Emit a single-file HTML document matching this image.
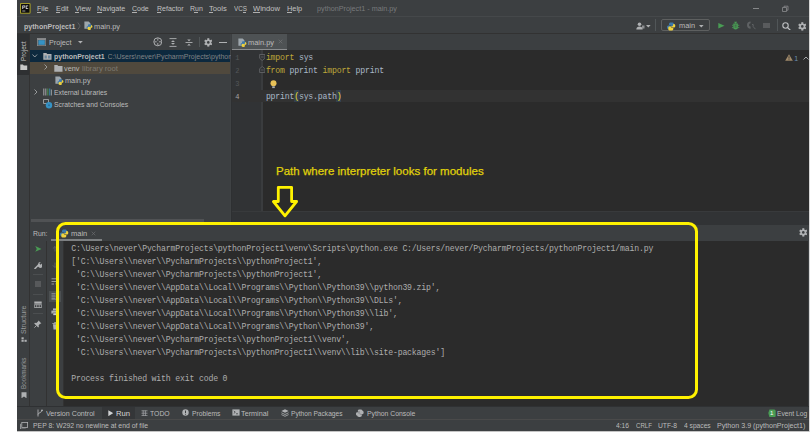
<!DOCTYPE html>
<html><head><meta charset="utf-8">
<style>
*{margin:0;padding:0;box-sizing:border-box}
html,body{width:810px;height:432px;overflow:hidden;background:#ffffff}
body{position:relative;font-family:"Liberation Sans",sans-serif;font-size:7px;color:#bbbbbb}
.a{position:absolute;display:block}
.t{position:absolute;white-space:nowrap;line-height:1}
.m{font-family:"Liberation Mono",monospace}
</style></head><body>
<div class="a" style="left:17px;top:0px;width:791.5px;height:431px;background:#3c3f41;"></div>
<div class="a" style="left:17px;top:16px;width:791.5px;height:1.3px;background:#45484a;"></div>
<div class="a" style="left:17px;top:33px;width:791.5px;height:1px;background:#323232;"></div>
<div class="a" style="left:17px;top:33.5px;width:12px;height:372.5px;background:#3c3f41;"></div>
<div class="a" style="left:17px;top:33.5px;width:12px;height:41.5px;background:#2e3032;"></div>
<div class="a" style="left:29px;top:33.5px;width:0.8px;height:372.5px;background:#323232;"></div>
<div class="a" style="left:29.8px;top:33.5px;width:201px;height:190.5px;background:#3c3f41;"></div>
<div class="a" style="left:29.8px;top:50px;width:201px;height:11.8px;background:#0d293e;"></div>
<div class="a" style="left:29.8px;top:61.8px;width:201px;height:11.8px;background:#50493d;"></div>
<div class="a" style="left:230.3px;top:33.5px;width:1.0px;height:191px;background:#3f4244;"></div>
<div class="a" style="left:231.2px;top:50.2px;width:0.9px;height:174.3px;background:#2e3032;"></div>
<div class="a" style="left:31px;top:219px;width:172.6px;height:3px;background:#505254;"></div>
<div class="a" style="left:231.5px;top:33.5px;width:577px;height:16.5px;background:#3c3f41;"></div>
<div class="a" style="left:231.5px;top:33.5px;width:55.5px;height:16.5px;background:#4e5254;"></div>
<div class="a" style="left:231.5px;top:48.5px;width:55.5px;height:1.5px;background:#8b8d8f;"></div>
<div class="a" style="left:231.5px;top:49.6px;width:577px;height:0.6px;background:#323232;"></div>
<div class="a" style="left:231.5px;top:50.2px;width:577px;height:160.8px;background:#2b2b2b;"></div>
<div class="a" style="left:231.5px;top:50.2px;width:29.5px;height:160.8px;background:#313335;"></div>
<div class="a" style="left:261px;top:50.2px;width:1.6px;height:160.8px;background:#3a3c3e;"></div>
<div class="a" style="left:231.5px;top:89.5px;width:577px;height:12.8px;background:#323232;"></div>
<div class="a" style="left:231.5px;top:211px;width:577px;height:13.5px;background:#313335;"></div>
<div class="a" style="left:231.5px;top:210.6px;width:577px;height:1px;background:#383a3c;"></div>
<div class="a" style="left:29.8px;top:224.5px;width:779px;height:16.2px;background:#3c3f41;"></div>
<div class="a" style="left:29.8px;top:240.7px;width:16.8px;height:165.3px;background:#3c3f41;"></div>
<div class="a" style="left:46.1px;top:240.7px;width:0.8px;height:165.3px;background:#323232;"></div>
<div class="a" style="left:46.9px;top:240.7px;width:17.1px;height:165.3px;background:#3c3f41;"></div>
<div class="a" style="left:63.0px;top:240.7px;width:0.8px;height:165.3px;background:#323232;"></div>
<div class="a" style="left:63.7px;top:240.7px;width:744.8px;height:165.3px;background:#2b2b2b;"></div>
<div class="a" style="left:17px;top:405.8px;width:791.5px;height:0.8px;background:#2f3133;"></div>
<div class="a" style="left:17px;top:406.5px;width:791.5px;height:13px;background:#3c3f41;"></div>
<div class="a" style="left:101.5px;top:406.5px;width:33px;height:13px;background:#343638;"></div>
<div class="a" style="left:17px;top:419.2px;width:791.5px;height:0.8px;background:#4a4a4a;"></div>
<div class="a" style="left:17px;top:420px;width:791.5px;height:10.8px;background:#3c3f41;"></div>
<div class="a" style="left:17px;top:430.8px;width:793px;height:1.2px;background:#c4c4c4;"></div>
<div class="a" style="left:808.6px;top:0px;width:1.4px;height:432px;background:#d6d6d6;"></div>
<svg class="a" style="left:20.2px;top:2.8px;" width="11" height="11" viewBox="0 0 11 11"><rect x="0.5" y="0.5" width="9.6" height="9.8" rx="0.8" fill="#0c0c0c" stroke="#a39c2c" stroke-width="1.1"/><path d="M2.3 2.4h0.9v3.6h-0.9zM3.2 2.4h1.6v0.8h-1.6zM4.4 2.4h0.8v2.2h-0.8zM3.2 3.9h1.6v0.7h-1.6zM5.8 2.4h2.4v0.8h-2.4zM5.8 2.4h0.8v3.6h-0.8zM5.8 5.3h2.4v0.8h-2.4z" fill="#e0e0e0"/><rect x="2.3" y="7.6" width="3" height="0.8" fill="#c8c8c8"/></svg>
<span class="t" style="transform-origin:0 0;transform:scaleX(1.0105);left:37.4px;top:5px;line-height:7px;font-size:7px;color:#c0c0c0;">File</span>
<div class="a" style="left:37.4px;top:12px;width:4px;height:0.9px;background:#b0b0b0;"></div>
<span class="t" style="transform-origin:0 0;transform:scaleX(1.0446);left:55.7px;top:5px;line-height:7px;font-size:7px;color:#c0c0c0;">Edit</span>
<div class="a" style="left:55.7px;top:12px;width:4px;height:0.9px;background:#b0b0b0;"></div>
<span class="t" style="transform-origin:0 0;transform:scaleX(1.0633);left:74.9px;top:5px;line-height:7px;font-size:7px;color:#c0c0c0;">View</span>
<div class="a" style="left:74.9px;top:12px;width:4.5px;height:0.9px;background:#b0b0b0;"></div>
<span class="t" style="transform-origin:0 0;transform:scaleX(1.0239);left:97.2px;top:5px;line-height:7px;font-size:7px;color:#c0c0c0;">Navigate</span>
<div class="a" style="left:97.2px;top:12px;width:5px;height:0.9px;background:#b0b0b0;"></div>
<span class="t" style="transform-origin:0 0;transform:scaleX(0.9979);left:132px;top:5px;line-height:7px;font-size:7px;color:#c0c0c0;">Code</span>
<div class="a" style="left:132px;top:12px;width:4.5px;height:0.9px;background:#b0b0b0;"></div>
<span class="t" style="transform-origin:0 0;transform:scaleX(1.0050);left:156.5px;top:5px;line-height:7px;font-size:7px;color:#c0c0c0;">Refactor</span>
<div class="a" style="left:156.5px;top:12px;width:4px;height:0.9px;background:#b0b0b0;"></div>
<span class="t" style="transform-origin:0 0;transform:scaleX(0.9966);left:190.4px;top:5px;line-height:7px;font-size:7px;color:#c0c0c0;">Run</span>
<div class="a" style="left:194.1px;top:12px;width:4px;height:0.9px;background:#b0b0b0;"></div>
<span class="t" style="transform-origin:0 0;transform:scaleX(1.0830);left:209.4px;top:5px;line-height:7px;font-size:7px;color:#c0c0c0;">Tools</span>
<div class="a" style="left:209.4px;top:12px;width:4px;height:0.9px;background:#b0b0b0;"></div>
<span class="t" style="transform-origin:0 0;transform:scaleX(0.9024);left:234px;top:5px;line-height:7px;font-size:7px;color:#c0c0c0;">VCS</span>
<div class="a" style="left:242.5px;top:12px;width:3.8px;height:0.9px;background:#b0b0b0;"></div>
<span class="t" style="transform-origin:0 0;transform:scaleX(1.0801);left:253.2px;top:5px;line-height:7px;font-size:7px;color:#c0c0c0;">Window</span>
<div class="a" style="left:253.2px;top:12px;width:6.5px;height:0.9px;background:#b0b0b0;"></div>
<span class="t" style="transform-origin:0 0;transform:scaleX(1.0551);left:287.1px;top:5px;line-height:7px;font-size:7px;color:#c0c0c0;">Help</span>
<div class="a" style="left:287.1px;top:12px;width:4.6px;height:0.9px;background:#b0b0b0;"></div>
<span class="t" style="transform-origin:0 0;transform:scaleX(1.0331);left:316.7px;top:5px;line-height:7px;font-size:7px;color:#787a7c;">pythonProject1 - main.py</span>
<div class="a" style="left:753px;top:8px;width:6px;height:0.8px;background:#858789;"></div>
<svg class="a" style="left:780.5px;top:4.5px;" width="8" height="8" viewBox="0 0 8 8"><path d="M1.5 2.5h4v4h-4z M3 2.5v-1.3h4v4h-1.5" fill="none" stroke="#8a8c8e" stroke-width="0.8"/></svg>
<span class="t" style="transform-origin:0 0;transform:scaleX(1.0068);left:23.7px;top:23px;line-height:7px;font-size:7px;color:#bbbbbb;font-weight:700;">pythonProject1</span>
<svg class="a" style="left:76.5px;top:22px;" width="4" height="8" viewBox="0 0 4 8"><path d="M0.8 0.5L3.2 4L0.8 7.5" fill="none" stroke="#6e6e6e" stroke-width="0.7"/></svg>
<svg class="a" style="left:83.6px;top:21px;" width="9" height="9" viewBox="0 0 9 9"><path d="M0.4 0.4h4.2l1.8 1.8v5.6H0.4z" fill="#9ea7ad"/><g transform="translate(2.6,2.9) scale(0.7)"><path d="M4 0.5c-1.6 0-2 0.7-2 1.5v1h2.2v0.5H1.3C0.5 3.5 0 4.2 0 5.3s0.5 1.9 1.3 1.9h0.8V6c0-0.8 0.7-1.4 1.5-1.4h2.2c0.6 0 1.2-0.5 1.2-1.2V2c0-0.9-0.8-1.5-2-1.5z" fill="#3c78aa"/><path d="M4.3 8.6c1.6 0 2-0.7 2-1.5v-1H4.1V5.6H7c0.8 0 1.3-0.7 1.3-1.8S7.8 1.9 7 1.9H6.2v1.2c0 0.8-0.7 1.4-1.5 1.4H2.5c-0.6 0-1.2 0.5-1.2 1.2V7c0 0.9 0.8 1.6 2 1.6z" fill="#f2d33c"/></g></svg>
<span class="t" style="transform-origin:0 0;transform:scaleX(1.0646);left:94px;top:23px;line-height:7px;font-size:7px;color:#bbbbbb;">main.py</span>
<svg class="a" style="left:635.5px;top:21.5px;" width="9" height="8" viewBox="0 0 9 8"><circle cx="3.5" cy="2.2" r="1.8" fill="#afb1b3"/><path d="M0.3 7.6c0-2 1.4-3 3.2-3s3.2 1 3.2 3z" fill="#afb1b3"/><path d="M6 3.5h2.5v3H6z" fill="#afb1b3" opacity="0.7"/></svg>
<svg class="a" style="left:646px;top:25px;" width="5" height="3" viewBox="0 0 5 3"><path d="M0 0h4.6L2.3 2.6z" fill="#afb1b3"/></svg>
<div class="a" style="left:655.2px;top:19.3px;width:0.8px;height:11.7px;background:#515658;"></div>
<div class="a" style="left:661.4px;top:19.3px;width:48.4px;height:12px;background:transparent;border:1px solid #5e6060;border-radius:2px"></div>
<svg class="a" style="left:666.7px;top:21.8px;" width="9" height="9" viewBox="0 0 9 9"><path d="M4 0.5c-1.6 0-2 0.7-2 1.5v1h2.2v0.5H1.3C0.5 3.5 0 4.2 0 5.3s0.5 1.9 1.3 1.9h0.8V6c0-0.8 0.7-1.4 1.5-1.4h2.2c0.6 0 1.2-0.5 1.2-1.2V2c0-0.9-0.8-1.5-2-1.5z" fill="#3c78aa"/><path d="M4.3 8.6c1.6 0 2-0.7 2-1.5v-1H4.1V5.6H7c0.8 0 1.3-0.7 1.3-1.8S7.8 1.9 7 1.9H6.2v1.2c0 0.8-0.7 1.4-1.5 1.4H2.5c-0.6 0-1.2 0.5-1.2 1.2V7c0 0.9 0.8 1.6 2 1.6z" fill="#f2d33c"/></svg>
<span class="t" style="transform-origin:0 0;transform:scaleX(1.0535);left:678.9px;top:22px;line-height:7px;font-size:7px;color:#bbbbbb;">main</span>
<svg class="a" style="left:699.4px;top:24.5px;" width="5" height="3" viewBox="0 0 5 3"><path d="M0 0h4.6L2.3 2.6z" fill="#afb1b3"/></svg>
<svg class="a" style="left:717.5px;top:22.5px;" width="7" height="6" viewBox="0 0 7 6"><path d="M0.3 0L6.5 2.8L0.3 5.6z" fill="#499c54"/></svg>
<svg class="a" style="left:732.3px;top:21.3px;" width="7.5" height="8.5" viewBox="0 0 7.5 8.5"><path d="M1.3 2.5h4.6v4.2c0 1-1 1.7-2.3 1.7S1.3 7.7 1.3 6.7z M2.1 0.8l0.9 1.4h1.2l0.9-1.4" fill="#499c54"/><path d="M0 4.3h1.3M5.9 4.3h1.4M0 6.6h1.3M5.9 6.6h1.4" stroke="#499c54" stroke-width="0.8"/><path d="M2.6 4.2h2M2.6 6h2" stroke="#3c3f41" stroke-width="0.7"/></svg>
<svg class="a" style="left:746.8px;top:21.3px;" width="9" height="8.5" viewBox="0 0 9 8.5"><path d="M3.6 0.5a3.6 3.6 0 1 0 0 7.2V5.5a1.6 1.6 0 1 1 0-3.2z" fill="#5f6264"/><path d="M5 3.5h1.2v2.2l2.3 2.5" fill="none" stroke="#5f6264" stroke-width="1"/></svg>
<div class="a" style="left:763.4px;top:22.7px;width:6.4px;height:5.6px;background:#595b5d;"></div>
<div class="a" style="left:776.5px;top:19.3px;width:0.8px;height:11.7px;background:#515658;"></div>
<svg class="a" style="left:781.8px;top:21.8px;" width="9" height="8.5" viewBox="0 0 9 8.5"><circle cx="3.5" cy="3.5" r="2.7" fill="none" stroke="#bfc1c3" stroke-width="1.1"/><path d="M5.4 5.4L8.3 8.2" stroke="#bfc1c3" stroke-width="1.3"/></svg>
<svg class="a" style="left:797.8px;top:22px;" width="8.6" height="8.8" viewBox="0 0 8.6 8.8"><g transform="translate(4.3,4.4)" fill="#afb1b3"><circle r="3"/><rect x="-1" y="-4.2" width="2" height="2" transform="rotate(0)"/><rect x="-1" y="-4.2" width="2" height="2" transform="rotate(60)"/><rect x="-1" y="-4.2" width="2" height="2" transform="rotate(120)"/><rect x="-1" y="-4.2" width="2" height="2" transform="rotate(180)"/><rect x="-1" y="-4.2" width="2" height="2" transform="rotate(240)"/><rect x="-1" y="-4.2" width="2" height="2" transform="rotate(300)"/><circle r="1.3" fill="#3c3f41"/></g></svg>
<svg class="a" style="left:36.8px;top:38.2px;" width="9.2" height="8.2" viewBox="0 0 9.2 8.2"><rect x="0.4" y="0.4" width="8.4" height="7.4" fill="#4e5254" stroke="#8a8c8e" stroke-width="0.8"/><rect x="1.4" y="2.2" width="6.4" height="4.6" fill="#3592c4"/><rect x="0.4" y="0.4" width="8.4" height="1.6" fill="#8a8c8e"/></svg>
<span class="t" style="transform-origin:0 0;transform:scaleX(1.0323);left:48.6px;top:39px;line-height:7px;font-size:7px;color:#bbbbbb;">Project</span>
<svg class="a" style="left:78px;top:41px;" width="5" height="3" viewBox="0 0 5 3"><path d="M0 0h4.8L2.4 2.6z" fill="#afb1b3"/></svg>
<svg class="a" style="left:152.8px;top:37.4px;" width="9.6" height="9.6" viewBox="0 0 9.6 9.6"><circle cx="4.8" cy="4.8" r="4" fill="none" stroke="#afb1b3" stroke-width="1"/><path d="M4.8 1.5v2.2M4.8 5.9v2.2M1.5 4.8h2.2M5.9 4.8h2.2" stroke="#afb1b3" stroke-width="0.9"/></svg>
<svg class="a" style="left:168.8px;top:37.8px;" width="8" height="9" viewBox="0 0 8 9"><path d="M0.5 0.6h7M0.5 8.4h7" stroke="#afb1b3" stroke-width="0.9"/><path d="M4 2.2L2 4h4z M4 6.8L2 5h4z" fill="#afb1b3"/></svg>
<svg class="a" style="left:184.8px;top:37.8px;" width="8" height="9" viewBox="0 0 8 9"><path d="M0.5 4.5h7" stroke="#afb1b3" stroke-width="0.9"/><path d="M4 3.3L2.2 1.4h3.6z M4 5.7L2.2 7.6h3.6z" fill="#afb1b3"/></svg>
<div class="a" style="left:198.6px;top:37px;width:0.8px;height:10px;background:#515658;"></div>
<svg class="a" style="left:203.8px;top:37.8px;" width="8.6" height="8.8" viewBox="0 0 8.6 8.8"><g transform="translate(4.3,4.4)" fill="#afb1b3"><circle r="3"/><rect x="-1" y="-4.2" width="2" height="2" transform="rotate(0)"/><rect x="-1" y="-4.2" width="2" height="2" transform="rotate(60)"/><rect x="-1" y="-4.2" width="2" height="2" transform="rotate(120)"/><rect x="-1" y="-4.2" width="2" height="2" transform="rotate(180)"/><rect x="-1" y="-4.2" width="2" height="2" transform="rotate(240)"/><rect x="-1" y="-4.2" width="2" height="2" transform="rotate(300)"/><circle r="1.3" fill="#3c3f41"/></g></svg>
<div class="a" style="left:219.4px;top:41.5px;width:7.8px;height:1px;background:#afb1b3;"></div>
<svg class="a" style="left:32.3px;top:53.5px;" width="6" height="4" viewBox="0 0 6 4"><path d="M0.5 0.5L2.8 3L5.1 0.5" fill="none" stroke="#afb1b3" stroke-width="0.8"/></svg>
<svg class="a" style="left:43.4px;top:52px;" width="9" height="8" viewBox="0 0 9 8"><path d="M0.3 1h3l1 1h4.2v5.7H0.3z" fill="#afb1b3"/><path d="M1.6 3.5h2.2v3H1.6zM5 3.5h2.4v3H5z" fill="#3a6b8f" opacity="0.6"/></svg>
<span class="t" style="transform-origin:0 0;transform:scaleX(0.9950);left:53.9px;top:53px;line-height:7px;font-size:7px;color:#bbbbbb;font-weight:700;">pythonProject1</span>
<div class="a" style="left:107.6px;top:50px;width:123px;height:12px;overflow:hidden"><span class="t" style="left:0;top:3px;line-height:7px;font-size:7px;color:#808385">C:\Users\never\PycharmProjects\pythonProject1</span></div>
<svg class="a" style="left:44px;top:64.2px;" width="4" height="6" viewBox="0 0 4 6"><path d="M0.5 0.5L3 3L0.5 5.5" fill="none" stroke="#afb1b3" stroke-width="0.8"/></svg>
<svg class="a" style="left:54px;top:63.8px;" width="9" height="8" viewBox="0 0 9 8"><path d="M0.3 1h3l1 1h4.2v5.7H0.3z" fill="#afb1b3"/></svg>
<span class="t" style="transform-origin:0 0;transform:scaleX(1.0475);left:64.4px;top:65px;line-height:7px;font-size:7px;color:#bbbbbb;">venv</span>
<span class="t" style="transform-origin:0 0;transform:scaleX(1.0853);left:81.7px;top:65px;line-height:7px;font-size:7px;color:#7e7a72;">library root</span>
<svg class="a" style="left:55px;top:75.5px;" width="9" height="9" viewBox="0 0 9 9"><path d="M0.4 0.4h4.2l1.8 1.8v5.6H0.4z" fill="#9ea7ad"/><g transform="translate(2.6,2.9) scale(0.7)"><path d="M4 0.5c-1.6 0-2 0.7-2 1.5v1h2.2v0.5H1.3C0.5 3.5 0 4.2 0 5.3s0.5 1.9 1.3 1.9h0.8V6c0-0.8 0.7-1.4 1.5-1.4h2.2c0.6 0 1.2-0.5 1.2-1.2V2c0-0.9-0.8-1.5-2-1.5z" fill="#3c78aa"/><path d="M4.3 8.6c1.6 0 2-0.7 2-1.5v-1H4.1V5.6H7c0.8 0 1.3-0.7 1.3-1.8S7.8 1.9 7 1.9H6.2v1.2c0 0.8-0.7 1.4-1.5 1.4H2.5c-0.6 0-1.2 0.5-1.2 1.2V7c0 0.9 0.8 1.6 2 1.6z" fill="#f2d33c"/></g></svg>
<span class="t" style="transform-origin:0 0;transform:scaleX(1.0442);left:64.8px;top:77px;line-height:7px;font-size:7px;color:#bbbbbb;">main.py</span>
<svg class="a" style="left:33.6px;top:88.8px;" width="4" height="6" viewBox="0 0 4 6"><path d="M0.5 0.5L3 3L0.5 5.5" fill="none" stroke="#afb1b3" stroke-width="0.8"/></svg>
<svg class="a" style="left:42.8px;top:88px;" width="9" height="8" viewBox="0 0 9 8"><path d="M0.8 0.5v7M2.8 0.5v7" stroke="#afb1b3" stroke-width="0.9"/><path d="M4.8 0.5v7" stroke="#499c54" stroke-width="0.9"/><path d="M6.8 0.5v7" stroke="#3592c4" stroke-width="0.9"/><path d="M8.4 1.5v6" stroke="#afb1b3" stroke-width="0.8"/></svg>
<span class="t" style="transform-origin:0 0;transform:scaleX(0.9767);left:53.9px;top:89px;line-height:7px;font-size:7px;color:#bbbbbb;">External Libraries</span>
<svg class="a" style="left:42.8px;top:99.2px;" width="10" height="10" viewBox="0 0 10 10"><path d="M0.5 0.5h5v4h-5z" fill="none" stroke="#afb1b3" stroke-width="0.8"/><circle cx="6" cy="6.3" r="3.2" fill="#3592c4"/><circle cx="6" cy="6.3" r="1" fill="#2c6fa0"/></svg>
<span class="t" style="transform-origin:0 0;transform:scaleX(0.9777);left:53.9px;top:101px;line-height:7px;font-size:7px;color:#bbbbbb;">Scratches and Consoles</span>
<span class="t" style="left:0px;top:-6px;line-height:7px;font-size:7px;color:#bbbbbb;"></span>
<span class="t" style="left:20.3px;top:60.5px;font-size:6.3px;line-height:7px;color:#c4c4c4;transform-origin:0 0;transform:rotate(-90deg);">Project</span>
<svg class="a" style="left:20.2px;top:63.5px;" width="7.5" height="6.5" viewBox="0 0 7.5 6.5"><path d="M0.3 0.6h2.6l0.9 0.9h3.4v4.7H0.3z" fill="#c8c8c8"/></svg>
<svg class="a" style="left:237.8px;top:38.2px;" width="9" height="9" viewBox="0 0 9 9"><path d="M0.4 0.4h4.2l1.8 1.8v5.6H0.4z" fill="#9ea7ad"/><g transform="translate(2.6,2.9) scale(0.7)"><path d="M4 0.5c-1.6 0-2 0.7-2 1.5v1h2.2v0.5H1.3C0.5 3.5 0 4.2 0 5.3s0.5 1.9 1.3 1.9h0.8V6c0-0.8 0.7-1.4 1.5-1.4h2.2c0.6 0 1.2-0.5 1.2-1.2V2c0-0.9-0.8-1.5-2-1.5z" fill="#3c78aa"/><path d="M4.3 8.6c1.6 0 2-0.7 2-1.5v-1H4.1V5.6H7c0.8 0 1.3-0.7 1.3-1.8S7.8 1.9 7 1.9H6.2v1.2c0 0.8-0.7 1.4-1.5 1.4H2.5c-0.6 0-1.2 0.5-1.2 1.2V7c0 0.9 0.8 1.6 2 1.6z" fill="#f2d33c"/></g></svg>
<span class="t" style="transform-origin:0 0;transform:scaleX(1.0605);left:248.2px;top:39px;line-height:7px;font-size:7px;color:#bbbbbb;">main.py</span>
<svg class="a" style="left:278px;top:39.3px;" width="5" height="5" viewBox="0 0 5 5"><path d="M0.7 0.7L4.3 4.3M4.3 0.7L0.7 4.3" stroke="#727476" stroke-width="0.7"/></svg>
<span class="t m" style="left:235.2px;top:54px;line-height:8px;font-size:7px;color:#54575a;letter-spacing:-0.2px;">1</span>
<span class="t m" style="left:235.2px;top:67px;line-height:8px;font-size:7px;color:#54575a;letter-spacing:-0.2px;">2</span>
<span class="t m" style="left:235.2px;top:80px;line-height:8px;font-size:7px;color:#54575a;letter-spacing:-0.2px;">3</span>
<span class="t m" style="left:235.2px;top:93px;line-height:8px;font-size:7px;color:#a4a3a3;letter-spacing:-0.2px;">4</span>
<svg class="a" style="left:258.5px;top:53.5px;" width="6.5" height="7" viewBox="0 0 6.5 7"><path d="M0.6 0.5h5.3v3.8L3.25 6.5L0.6 4.3z" fill="#313335" stroke="#6e7072" stroke-width="0.7"/><path d="M1.8 3h2.9" stroke="#6e7072" stroke-width="0.6"/></svg>
<svg class="a" style="left:258.5px;top:65.8px;" width="6.5" height="7" viewBox="0 0 6.5 7"><path d="M0.6 6.5h5.3v-3.8L3.25 0.5L0.6 2.7z" fill="#313335" stroke="#6e7072" stroke-width="0.7"/><path d="M1.8 4h2.9" stroke="#6e7072" stroke-width="0.6"/></svg>
<span class="t m" style="left:265.9px;top:53px;line-height:9px;font-size:8.2px;color:#bfa83a;letter-spacing:-0.2px;">import</span>
<span class="t m" style="left:294.21999999999997px;top:53px;line-height:9px;font-size:8.2px;color:#a9b7c6;letter-spacing:-0.2px;">&nbsp;sys</span>
<span class="t m" style="left:265.9px;top:66px;line-height:9px;font-size:8.2px;color:#bfa83a;letter-spacing:-0.2px;">from</span>
<span class="t m" style="left:284.78px;top:66px;line-height:9px;font-size:8.2px;color:#a9b7c6;letter-spacing:-0.2px;">&nbsp;pprint&nbsp;</span>
<span class="t m" style="left:322.53999999999996px;top:66px;line-height:9px;font-size:8.2px;color:#bfa83a;letter-spacing:-0.2px;">import</span>
<span class="t m" style="left:350.85999999999996px;top:66px;line-height:9px;font-size:8.2px;color:#a9b7c6;letter-spacing:-0.2px;">&nbsp;pprint</span>
<div class="a" style="left:293.61999999999995px;top:89.8px;width:5.3px;height:12px;background:#34404e;"></div>
<div class="a" style="left:336.09999999999997px;top:89.8px;width:5.3px;height:12px;background:#34404e;"></div>
<span class="t m" style="left:265.9px;top:92px;line-height:9px;font-size:8.2px;color:#a9b7c6;letter-spacing:-0.2px;">pprint</span>
<span class="t m" style="left:294.21999999999997px;top:92px;line-height:9px;font-size:8.2px;color:#f5e22a;letter-spacing:-0.2px;">(</span>
<span class="t m" style="left:298.94px;top:92px;line-height:9px;font-size:8.2px;color:#a9b7c6;letter-spacing:-0.2px;">sys.path</span>
<span class="t m" style="left:336.7px;top:92px;line-height:9px;font-size:8.2px;color:#f5e22a;letter-spacing:-0.2px;">)</span>
<svg class="a" style="left:269.6px;top:80.4px;" width="7" height="9" viewBox="0 0 7 9"><circle cx="3.5" cy="3.3" r="3" fill="#e8c157"/><rect x="2.2" y="6.3" width="2.6" height="1.8" fill="#a8adb1"/></svg>
<svg class="a" style="left:784.8px;top:54.3px;" width="8" height="7" viewBox="0 0 8 7"><path d="M4 0.3L7.8 6.7H0.2z" fill="#a18a6a"/><path d="M4 2.3v2.3M4 5.3v0.8" stroke="#2b2b2b" stroke-width="0.8"/></svg>
<span class="t" style="left:794.3px;top:55px;line-height:7px;font-size:7px;color:#6c8fb3;">1</span>
<svg class="a" style="left:802.8px;top:55.5px;" width="6" height="4" viewBox="0 0 6 4"><path d="M0.5 3.5L3 1L5.5 3.5" fill="none" stroke="#afb1b3" stroke-width="0.9"/></svg>
<span class="t" style="transform-origin:0 0;transform:scaleX(1.0125);left:275.7px;top:165px;line-height:12px;font-size:11.4px;color:#e0d20a;-webkit-text-stroke:0.25px #e0d20a;">Path where interpreter looks for modules</span>
<svg class="a" style="left:266px;top:182px;" width="40" height="40" viewBox="0 0 40 40"><path d="M12.3 5.3H25.6V19.5H30.6L19 33.8L7.4 19.5H12.3Z" fill="none" stroke="#fff200" stroke-width="2.8" stroke-linejoin="round"/></svg>
<span class="t" style="transform-origin:0 0;transform:scaleX(0.9799);left:33.3px;top:230px;line-height:7px;font-size:7px;color:#bbbbbb;">Run:</span>
<svg class="a" style="left:59.6px;top:228.8px;" width="9" height="9" viewBox="0 0 9 9"><path d="M4 0.5c-1.6 0-2 0.7-2 1.5v1h2.2v0.5H1.3C0.5 3.5 0 4.2 0 5.3s0.5 1.9 1.3 1.9h0.8V6c0-0.8 0.7-1.4 1.5-1.4h2.2c0.6 0 1.2-0.5 1.2-1.2V2c0-0.9-0.8-1.5-2-1.5z" fill="#3c78aa"/><path d="M4.3 8.6c1.6 0 2-0.7 2-1.5v-1H4.1V5.6H7c0.8 0 1.3-0.7 1.3-1.8S7.8 1.9 7 1.9H6.2v1.2c0 0.8-0.7 1.4-1.5 1.4H2.5c-0.6 0-1.2 0.5-1.2 1.2V7c0 0.9 0.8 1.6 2 1.6z" fill="#f2d33c"/></svg>
<span class="t" style="transform-origin:0 0;transform:scaleX(1.0733);left:70.6px;top:230px;line-height:7px;font-size:7px;color:#bbbbbb;">main</span>
<svg class="a" style="left:91px;top:230.5px;" width="5" height="5" viewBox="0 0 5 5"><path d="M0.7 0.7L4.3 4.3M4.3 0.7L0.7 4.3" stroke="#6a6c6e" stroke-width="0.7"/></svg>
<div class="a" style="left:51px;top:239.2px;width:51px;height:1.6px;background:#7d8082;"></div>
<svg class="a" style="left:798.8px;top:228.3px;" width="8.6" height="8.8" viewBox="0 0 8.6 8.8"><g transform="translate(4.3,4.4)" fill="#afb1b3"><circle r="3"/><rect x="-1" y="-4.2" width="2" height="2" transform="rotate(0)"/><rect x="-1" y="-4.2" width="2" height="2" transform="rotate(60)"/><rect x="-1" y="-4.2" width="2" height="2" transform="rotate(120)"/><rect x="-1" y="-4.2" width="2" height="2" transform="rotate(180)"/><rect x="-1" y="-4.2" width="2" height="2" transform="rotate(240)"/><rect x="-1" y="-4.2" width="2" height="2" transform="rotate(300)"/><circle r="1.3" fill="#3c3f41"/></g></svg>
<svg class="a" style="left:34.5px;top:246.2px;" width="7" height="6" viewBox="0 0 7 6"><path d="M0.2 0L6.5 2.9L0.2 5.8L1.8 2.9z" fill="#499c54"/></svg>
<svg class="a" style="left:33.5px;top:260.5px;" width="8.5" height="8.5" viewBox="0 0 8.5 8.5"><path d="M1 7.5L4.3 4.2" stroke="#afb1b3" stroke-width="1.6" stroke-linecap="round"/><path d="M4 3.2a2.6 2.6 0 1 0 4.2 -0.8l-1.6 1.4-1.2-1.2 1.4-1.6a2.6 2.6 0 0 0 -2.8 2.2z" fill="#afb1b3"/></svg>
<div class="a" style="left:33px;top:274.4px;width:9.5px;height:0.6px;background:#4b4e50;"></div>
<div class="a" style="left:35.2px;top:281.3px;width:6px;height:6px;background:#57595b;"></div>
<div class="a" style="left:33px;top:293.8px;width:9.5px;height:0.6px;background:#4b4e50;"></div>
<svg class="a" style="left:33.8px;top:300.8px;" width="8" height="7" viewBox="0 0 8 7"><rect x="0.3" y="0.5" width="7.4" height="2.2" fill="#afb1b3"/><path d="M0.3 3.7h7.4v2.8H0.3z" fill="none" stroke="#afb1b3" stroke-width="0.8"/><path d="M2.7 3.7v2.8M5.2 3.7v2.8" stroke="#afb1b3" stroke-width="0.7"/></svg>
<div class="a" style="left:33px;top:313px;width:9.5px;height:0.6px;background:#4b4e50;"></div>
<svg class="a" style="left:34px;top:319.5px;" width="8" height="8" viewBox="0 0 8 8"><path d="M4.6 0.6l2.8 2.8-1.2 0.3-1.6 1.6 0.3 1.5-0.7 0.7-4-4 0.7-0.7 1.5 0.3 1.6-1.6z" fill="#afb1b3"/><path d="M2.3 5.7L0.4 7.6" stroke="#afb1b3" stroke-width="0.9"/></svg>
<svg class="a" style="left:51.5px;top:246px;" width="6" height="6" viewBox="0 0 6 6"><path d="M3 0.5v5M0.8 2.7L3 0.5l2.2 2.2" fill="none" stroke="#5f6264" stroke-width="0.9"/></svg>
<svg class="a" style="left:51.5px;top:262px;" width="6" height="6" viewBox="0 0 6 6"><path d="M3 0.5v5M0.8 3.3L3 5.5l2.2-2.2" fill="none" stroke="#5f6264" stroke-width="0.9"/></svg>
<svg class="a" style="left:50.5px;top:277.5px;" width="8" height="7" viewBox="0 0 8 7"><path d="M0.5 0.8h7M0.5 3.5h5.6a1.2 1.2 0 0 1 0 2.4H4.5M0.5 6h2.5" fill="none" stroke="#afb1b3" stroke-width="0.8"/></svg>
<div class="a" style="left:48.5px;top:290.5px;width:12px;height:11px;background:#4c5052;"></div>
<svg class="a" style="left:50.5px;top:292.5px;" width="8" height="7.5" viewBox="0 0 8 7.5"><path d="M0.5 0.8h4M0.5 3h4M0.5 5.2h4M0.5 7h7" fill="none" stroke="#afb1b3" stroke-width="0.8"/><path d="M6.2 0.5v4.5M5 3.8L6.2 5l1.2-1.2" fill="none" stroke="#afb1b3" stroke-width="0.7"/></svg>
<svg class="a" style="left:50.5px;top:308px;" width="8.5" height="7.5" viewBox="0 0 8.5 7.5"><rect x="2" y="0.4" width="4.5" height="2" fill="#afb1b3"/><rect x="0.4" y="2.6" width="7.7" height="3" fill="#afb1b3"/><rect x="2" y="5" width="4.5" height="2.2" fill="#d0d0d0" stroke="#3c3f41" stroke-width="0.5"/></svg>
<svg class="a" style="left:51.5px;top:322px;" width="7" height="8" viewBox="0 0 7 8"><path d="M0.3 1.5h6.4M2.5 1.5v-1h2v1" fill="none" stroke="#afb1b3" stroke-width="0.8"/><path d="M1 2.3h5l-0.5 5.3h-4z" fill="#afb1b3"/></svg>
<span class="t m" style="left:71.2px;top:244px;line-height:9px;font-size:8.2px;color:#adadad;letter-spacing:-0.182px;">C:\Users\never\PycharmProjects\pythonProject1\venv\Scripts\python.exe&nbsp;C:/Users/never/PycharmProjects/pythonProject1/main.py</span>
<span class="t m" style="left:71.2px;top:257px;line-height:9px;font-size:8.2px;color:#adadad;letter-spacing:-0.182px;">['C:\\Users\\never\\PycharmProjects\\pythonProject1',</span>
<span class="t m" style="left:71.2px;top:270px;line-height:9px;font-size:8.2px;color:#adadad;letter-spacing:-0.182px;">&nbsp;'C:\\Users\\never\\PycharmProjects\\pythonProject1',</span>
<span class="t m" style="left:71.2px;top:283px;line-height:9px;font-size:8.2px;color:#adadad;letter-spacing:-0.182px;">&nbsp;'C:\\Users\\never\\AppData\\Local\\Programs\\Python\\Python39\\python39.zip',</span>
<span class="t m" style="left:71.2px;top:296px;line-height:9px;font-size:8.2px;color:#adadad;letter-spacing:-0.182px;">&nbsp;'C:\\Users\\never\\AppData\\Local\\Programs\\Python\\Python39\\DLLs',</span>
<span class="t m" style="left:71.2px;top:309px;line-height:9px;font-size:8.2px;color:#adadad;letter-spacing:-0.182px;">&nbsp;'C:\\Users\\never\\AppData\\Local\\Programs\\Python\\Python39\\lib',</span>
<span class="t m" style="left:71.2px;top:322px;line-height:9px;font-size:8.2px;color:#adadad;letter-spacing:-0.182px;">&nbsp;'C:\\Users\\never\\AppData\\Local\\Programs\\Python\\Python39',</span>
<span class="t m" style="left:71.2px;top:335px;line-height:9px;font-size:8.2px;color:#adadad;letter-spacing:-0.182px;">&nbsp;'C:\\Users\\never\\PycharmProjects\\pythonProject1\\venv',</span>
<span class="t m" style="left:71.2px;top:348px;line-height:9px;font-size:8.2px;color:#adadad;letter-spacing:-0.182px;">&nbsp;'C:\\Users\\never\\PycharmProjects\\pythonProject1\\venv\\lib\\site-packages']</span>
<span class="t m" style="left:71.2px;top:374px;line-height:9px;font-size:8.2px;color:#adadad;letter-spacing:-0.182px;">Process&nbsp;finished&nbsp;with&nbsp;exit&nbsp;code&nbsp;0</span>
<div class="a" style="left:55.7px;top:221.9px;width:642px;height:177.1px;border:3.3px solid #fff200;border-radius:9.5px"></div>
<svg class="a" style="left:36.8px;top:409.3px;" width="6" height="8" viewBox="0 0 6 8"><path d="M1 0.5v7M1 5.5c0-2 4-1.5 4-4.5" fill="none" stroke="#afb1b3" stroke-width="0.9"/><circle cx="5" cy="1.3" r="0.9" fill="#afb1b3"/></svg>
<span class="t" style="transform-origin:0 0;transform:scaleX(1.0176);left:46.4px;top:410px;line-height:7px;font-size:7px;color:#bbbbbb;">Version Control</span>
<svg class="a" style="left:107.7px;top:409.8px;" width="5.5" height="6.5" viewBox="0 0 5.5 6.5"><path d="M0.3 0.2L5.2 3.2L0.3 6.2z" fill="#cfd1d3"/></svg>
<span class="t" style="transform-origin:0 0;transform:scaleX(1.0900);left:116.3px;top:410px;line-height:7px;font-size:7px;color:#d8d8d8;">Run</span>
<svg class="a" style="left:140.8px;top:409.8px;" width="7" height="6.5" viewBox="0 0 7 6.5"><path d="M0.5 0.8h6M0.5 3.2h6M0.5 5.6h6M2.2 0.5v5.5M4.4 0.5v5.5" stroke="#9da0a2" stroke-width="0.8"/></svg>
<span class="t" style="transform-origin:0 0;transform:scaleX(0.9796);left:150.3px;top:410px;line-height:7px;font-size:7px;color:#bbbbbb;">TODO</span>
<svg class="a" style="left:181.8px;top:409.2px;" width="7" height="7" viewBox="0 0 7 7"><circle cx="3.5" cy="3.5" r="3.2" fill="#afb1b3"/><path d="M3.5 1.6v2.4M3.5 4.8v0.9" stroke="#3c3f41" stroke-width="1"/></svg>
<span class="t" style="transform-origin:0 0;transform:scaleX(0.9602);left:191.5px;top:410px;line-height:7px;font-size:7px;color:#bbbbbb;">Problems</span>
<svg class="a" style="left:231.6px;top:409.3px;" width="8" height="7" viewBox="0 0 8 7"><rect x="0.4" y="0.4" width="7.2" height="6.2" fill="#afb1b3"/><path d="M1.8 2l1.5 1.2-1.5 1.2M4 4.8h2" fill="none" stroke="#3c3f41" stroke-width="0.8"/></svg>
<span class="t" style="transform-origin:0 0;transform:scaleX(1.0358);left:241.4px;top:410px;line-height:7px;font-size:7px;color:#bbbbbb;">Terminal</span>
<svg class="a" style="left:281.2px;top:408.8px;" width="8" height="8" viewBox="0 0 8 8"><path d="M4 0.3L7.6 2L4 3.7L0.4 2z" fill="#afb1b3"/><path d="M0.4 3.8L4 5.5L7.6 3.8M0.4 5.6L4 7.3L7.6 5.6" fill="none" stroke="#afb1b3" stroke-width="0.8"/></svg>
<span class="t" style="transform-origin:0 0;transform:scaleX(0.9452);left:291.4px;top:410px;line-height:7px;font-size:7px;color:#bbbbbb;">Python Packages</span>
<svg class="a" style="left:356.4px;top:408.6px;" width="8.5" height="8.5" viewBox="0 0 8.5 8.5"><g transform="scale(0.92)"><path d="M4 0.5c-1.6 0-2 0.7-2 1.5v1h2.2v0.5H1.3C0.5 3.5 0 4.2 0 5.3s0.5 1.9 1.3 1.9h0.8V6c0-0.8 0.7-1.4 1.5-1.4h2.2c0.6 0 1.2-0.5 1.2-1.2V2c0-0.9-0.8-1.5-2-1.5z" fill="#afb1b3"/><path d="M4.3 8.6c1.6 0 2-0.7 2-1.5v-1H4.1V5.6H7c0.8 0 1.3-0.7 1.3-1.8S7.8 1.9 7 1.9H6.2v1.2c0 0.8-0.7 1.4-1.5 1.4H2.5c-0.6 0-1.2 0.5-1.2 1.2V7c0 0.9 0.8 1.6 2 1.6z" fill="#afb1b3"/></g></svg>
<span class="t" style="transform-origin:0 0;transform:scaleX(0.9793);left:366.6px;top:410px;line-height:7px;font-size:7px;color:#bbbbbb;">Python Console</span>
<svg class="a" style="left:767.5px;top:409px;" width="8" height="8" viewBox="0 0 8 8"><path d="M1.5 0.5h5l1.2 1.2v5.6l-1.2 1.2h-5L0.3 4z" fill="#499c54"/></svg>
<span class="t" style="left:770px;top:410px;line-height:6px;font-size:6px;color:#ffffff;">1</span>
<span class="t" style="transform-origin:0 0;transform:scaleX(0.9546);left:777.3px;top:410px;line-height:7px;font-size:7px;color:#bbbbbb;">Event Log</span>
<svg class="a" style="left:19.8px;top:421.5px;" width="8" height="7.5" viewBox="0 0 8 7.5"><rect x="1.8" y="0.4" width="5.8" height="5" fill="none" stroke="#afb1b3" stroke-width="0.8"/><path d="M0.4 1.8v5.3h5.3" fill="none" stroke="#afb1b3" stroke-width="0.8"/></svg>
<span class="t" style="transform-origin:0 0;transform:scaleX(0.9805);left:33px;top:422px;line-height:7px;font-size:7px;color:#bbbbbb;">PEP 8: W292 no newline at end of file</span>
<span class="t" style="transform-origin:0 0;transform:scaleX(0.9541);left:616px;top:422px;line-height:7px;font-size:7px;color:#bbbbbb;">4:16</span>
<span class="t" style="transform-origin:0 0;transform:scaleX(0.8752);left:635.7px;top:422px;line-height:7px;font-size:7px;color:#bbbbbb;">CRLF</span>
<span class="t" style="transform-origin:0 0;transform:scaleX(0.9625);left:658.3px;top:422px;line-height:7px;font-size:7px;color:#bbbbbb;">UTF-8</span>
<span class="t" style="transform-origin:0 0;transform:scaleX(0.9525);left:684px;top:422px;line-height:7px;font-size:7px;color:#bbbbbb;">4 spaces</span>
<span class="t" style="transform-origin:0 0;transform:scaleX(1.0187);left:717.3px;top:422px;line-height:7px;font-size:7px;color:#bbbbbb;">Python 3.9 (pythonProject1)</span>
<span class="t" style="left:19.8px;top:333.5px;font-size:7px;line-height:7px;color:#9a9c9e;transform-origin:0 0;transform:rotate(-90deg);">Structure</span>
<svg class="a" style="left:20.5px;top:336.8px;" width="6" height="5" viewBox="0 0 6 5"><rect x="0.5" y="0.3" width="2.2" height="2" fill="#afb1b3"/><rect x="0.5" y="2.8" width="2.2" height="2" fill="#afb1b3"/><rect x="3.5" y="2.8" width="2.2" height="2" fill="#afb1b3"/></svg>
<span class="t" style="left:19.8px;top:388.5px;font-size:6.3px;line-height:7px;color:#9a9c9e;transform-origin:0 0;transform:rotate(-90deg);">Bookmarks</span>
<svg class="a" style="left:20.8px;top:391.5px;" width="6" height="6.5" viewBox="0 0 6 6.5"><path d="M0.5 0.3h5v6L3 4.5L0.5 6.3z" fill="#afb1b3"/></svg>
</body></html>
